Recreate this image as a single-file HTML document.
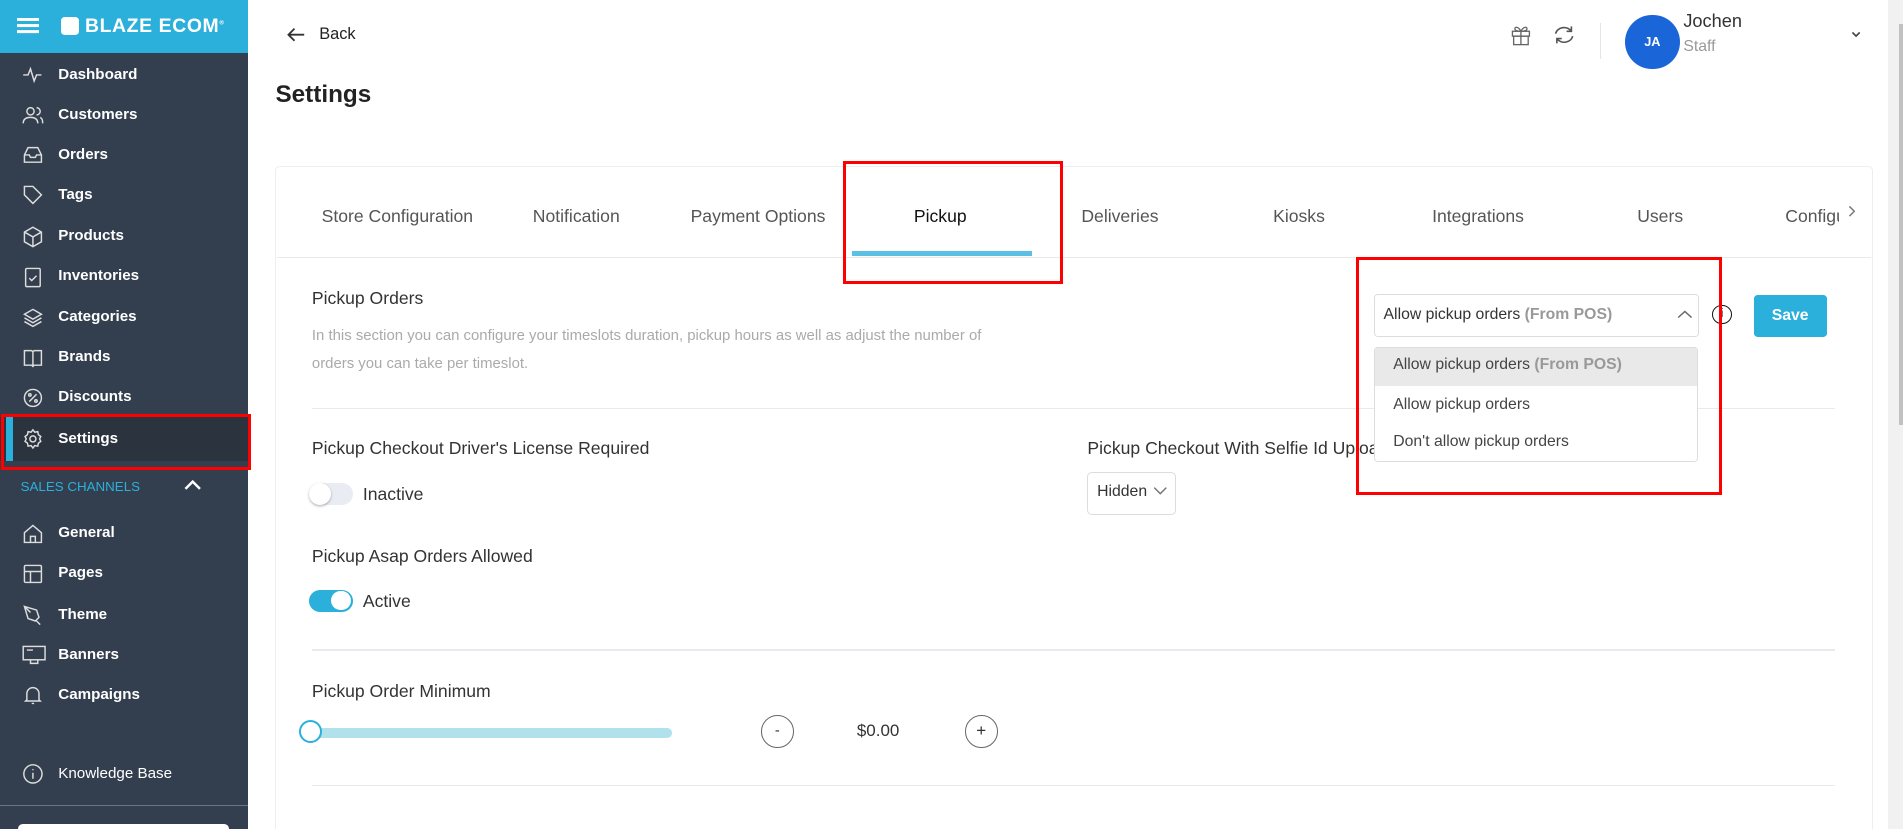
<!DOCTYPE html>
<html><head><meta charset="utf-8"><style>
html,body{margin:0;padding:0;overflow:hidden;background:#fff}
body{width:1903px;height:829px}
#r{zoom:1.21365;width:1568px;height:683px;position:relative;font-family:"Liberation Sans",sans-serif;color:#333;overflow:hidden}
.a{position:absolute}
#sb{left:0;top:0;width:204px;height:683px;background:#333f4e}
#top{left:0;top:0;width:204px;height:44px;background:#2bb0dc}
.nav{position:absolute;left:0;width:204px;height:33px;color:#fff;font-size:12.5px;font-weight:bold}
.nav span{position:absolute;left:48px;top:9px}
.nav svg{position:absolute;left:18px;top:8px}
.t{position:absolute;font-size:14.5px;color:#555;top:170px}
.lab{font-size:14.5px;color:#333}
.sep{position:absolute;left:257px;width:1255px;height:1px;background:#e9eaf0}
.red{position:absolute;border:2.5px solid #f00;box-sizing:border-box}
</style></head><body><div id="r">
<div class="a" id="sb"></div>
<div class="a" id="top">
 <div class="a" style="left:14px;top:15px;width:18px;height:2px;background:#fff;box-shadow:0 5px 0 #fff,0 10px 0 #fff"></div>
 <div class="a" style="left:50px;top:14px;width:15px;height:15px;background:#fff;border-radius:3px"></div>
 <div class="a" style="left:70px;top:12px;color:#fff;font-weight:bold;font-size:16px;letter-spacing:0.5px">BLAZE ECOM<sup style="font-size:5px">®</sup></div>
</div>
<div class="nav" style="top:45px"><svg width="18" height="18" viewBox="0 0 18 18" fill="none" stroke="#ddd" stroke-width="1.2"><path d="M1 9h4l2-5 3 10 2-5h4"/></svg><span>Dashboard</span></div>
<div class="nav" style="top:78px"><svg width="18" height="18" viewBox="0 0 18 18" fill="none" stroke="#ddd" stroke-width="1.2"><circle cx="7" cy="6" r="3"/><path d="M1 16c0-4 3-5 6-5s6 1 6 5M12 3a3 3 0 010 6M15 11c2 1 2 3 2 5"/></svg><span>Customers</span></div>
<div class="nav" style="top:111px"><svg width="18" height="18" viewBox="0 0 18 18" fill="none" stroke="#ddd" stroke-width="1.2"><path d="M2 9l3-6h8l3 6v6H2zM2 9h4l1 2h4l1-2h4"/></svg><span>Orders</span></div>
<div class="nav" style="top:144px"><svg width="18" height="18" viewBox="0 0 18 18" fill="none" stroke="#ddd" stroke-width="1.2"><path d="M2 2h7l7 7-7 7-7-7z"/></svg><span>Tags</span></div>
<div class="nav" style="top:178px"><svg width="18" height="18" viewBox="0 0 18 18" fill="none" stroke="#ddd" stroke-width="1.2"><path d="M9 1l7 4v8l-7 4-7-4V5zM2 5l7 4 7-4M9 9v8"/></svg><span>Products</span></div>
<div class="nav" style="top:211px"><svg width="18" height="18" viewBox="0 0 18 18" fill="none" stroke="#ddd" stroke-width="1.2"><rect x="3" y="2" width="12" height="15" rx="1"/><path d="M6 10l2 2 4-4"/></svg><span>Inventories</span></div>
<div class="nav" style="top:245px"><svg width="18" height="18" viewBox="0 0 18 18" fill="none" stroke="#ddd" stroke-width="1.2"><path d="M9 2l7 4-7 4-7-4zM2 9l7 4 7-4M2 12l7 4 7-4"/></svg><span>Categories</span></div>
<div class="nav" style="top:278px"><svg width="18" height="18" viewBox="0 0 18 18" fill="none" stroke="#ddd" stroke-width="1.2"><path d="M2 3h6l1 1 1-1h6v12h-6l-1 1-1-1H2zM9 4v12"/></svg><span>Brands</span></div>
<div class="nav" style="top:311px"><svg width="18" height="18" viewBox="0 0 18 18" fill="none" stroke="#ddd" stroke-width="1.2"><circle cx="9" cy="9" r="7"/><path d="M6 12l6-6"/><circle cx="6.5" cy="6.5" r="1"/><circle cx="11.5" cy="11.5" r="1"/></svg><span>Discounts</span></div>
<div class="a" style="left:0;top:344px;width:204px;height:36px;background:#2a333e"></div>
<div class="a" style="left:5px;top:344px;width:6px;height:36px;background:#2bb0dc"></div>
<div class="nav" style="top:345px"><svg width="18" height="18" viewBox="0 0 18 18" fill="none" stroke="#ddd" stroke-width="1.2"><circle cx="9" cy="9" r="2.5"/><path d="M9 1.5l1.5 2 2.5-.5.5 2.5 2 1.5-1 2 1 2-2 1.5-.5 2.5-2.5-.5L9 16.5l-1.5-2-2.5.5-.5-2.5-2-1.5 1-2-1-2 2-1.5.5-2.5 2.5.5z"/></svg><span>Settings</span></div>
<div class="red" style="left:1px;top:341px;width:206px;height:46px"></div>
<div class="a" style="left:17px;top:395px;color:#2bb0dc;font-size:11px">SALES CHANNELS</div>
<svg class="a" style="left:151px;top:394px" width="16" height="12" viewBox="0 0 16 12" fill="none" stroke="#fff" stroke-width="2"><path d="M2 9l6-6 6 6"/></svg>
<div class="nav" style="top:423px"><svg width="18" height="18" viewBox="0 0 18 18" fill="none" stroke="#ddd" stroke-width="1.2"><path d="M2 8l7-6 7 6v8H2zM7 16v-5h4v5"/></svg><span>General</span></div>
<div class="nav" style="top:456px"><svg width="18" height="18" viewBox="0 0 18 18" fill="none" stroke="#ddd" stroke-width="1.2"><rect x="2" y="2" width="14" height="14" rx="1"/><path d="M2 7h14M7 7v9"/></svg><span>Pages</span></div>
<div class="nav" style="top:490px"><svg width="18" height="18" viewBox="0 0 18 18" fill="none" stroke="#ddd" stroke-width="1.2"><path d="M2 2l10 3 2 6-3 3-6-2zM2 2l5 5M12 14l3 3"/></svg><span>Theme</span></div>
<div class="nav" style="top:523px"><svg width="20" height="18" viewBox="0 0 20 18" fill="none" stroke="#ddd" stroke-width="1.2"><rect x="1" y="2" width="18" height="11"/><path d="M4 5h5M7 13v3h6v-3"/></svg><span>Banners</span></div>
<div class="nav" style="top:556px"><svg width="18" height="18" viewBox="0 0 18 18" fill="none" stroke="#ddd" stroke-width="1.2"><path d="M4 13V8a5 5 0 0110 0v5l1 1H3zM8 16h2"/></svg><span>Campaigns</span></div>
<div class="nav" style="top:621px;font-weight:normal"><svg width="18" height="18" viewBox="0 0 18 18" fill="none" stroke="#ddd" stroke-width="1.2"><circle cx="9" cy="9" r="7.5"/><path d="M9 8v5M9 5v1"/></svg><span>Knowledge Base</span></div>
<div class="a" style="left:0;top:663px;width:204px;height:1px;background:#6a7583"></div>
<div class="a" style="left:15px;top:679px;width:174px;height:10px;background:#fff;border-radius:4px"></div>

<svg class="a" style="left:236px;top:21px" width="16" height="16" viewBox="0 0 16 16" fill="none" stroke="#333" stroke-width="1.5"><path d="M15 8H2M7 3L2 8l5 5"/></svg>
<div class="a" style="left:263px;top:21px;font-size:13.5px;color:#222">Back</div>
<div class="a" style="left:227px;top:67px;font-size:20px;font-weight:bold;color:#222">Settings</div>
<svg class="a" style="left:1244px;top:20px" width="18" height="18" viewBox="0 0 18 18" fill="none" stroke="#666" stroke-width="1.1"><rect x="2" y="6" width="14" height="4"/><rect x="3" y="10" width="12" height="7"/><path d="M9 6v11M9 6c-2-4-5-4-5-2s5 2 5 2c2-4 5-4 5-2s-5 2-5 2"/></svg>
<svg class="a" style="left:1279px;top:20px" width="20" height="18" viewBox="0 0 20 18" fill="none" stroke="#555" stroke-width="1.3"><path d="M3 8a7 6 0 0113-2M17 10a7 6 0 01-13 2M16 2v4h-4M4 16v-4h4"/></svg>
<div class="a" style="left:1318px;top:19px;width:1px;height:30px;background:#e4e4e4"></div>
<div class="a" style="left:1339px;top:12px;width:45px;height:45px;border-radius:50%;background:#1a66d9;color:#fff;font-size:10.5px;font-weight:bold;text-align:center;line-height:45px">JA</div>
<div class="a" style="left:1387px;top:9px;font-size:15px;color:#333">Jochen</div>
<div class="a" style="left:1387px;top:31px;font-size:13px;color:#999">Staff</div>
<svg class="a" style="left:1524px;top:25px" width="10" height="8" viewBox="0 0 10 8" fill="none" stroke="#444" stroke-width="1.4"><path d="M2 2l3 3 3-3"/></svg>
<div class="a" style="left:1556px;top:0;width:12px;height:683px;background:#f1f1f1"></div>
<div class="a" style="left:1565px;top:20px;width:3px;height:330px;background:#c1c1c1"></div>

<div class="a" style="left:227px;top:137px;width:1315px;height:560px;border:1px solid #eceef2;border-radius:4px"></div>
<div class="a" style="left:228px;top:212px;width:1314px;height:1px;background:#e9eaf0"></div>
<div class="t" style="left:265px">Store Configuration</div>
<div class="t" style="left:439px">Notification</div>
<div class="t" style="left:569px">Payment Options</div>
<div class="t" style="left:753px;color:#111">Pickup</div>
<div class="t" style="left:891px">Deliveries</div>
<div class="t" style="left:1049px">Kiosks</div>
<div class="t" style="left:1180px">Integrations</div>
<div class="t" style="left:1349px">Users</div>
<div class="t" style="left:1471px;width:44px;overflow:hidden;white-space:nowrap">Configurations</div>
<svg class="a" style="left:1522px;top:168px" width="8" height="12" viewBox="0 0 8 12" fill="none" stroke="#777" stroke-width="1.2"><path d="M2 2l4 4-4 4"/></svg>
<div class="a" style="left:702px;top:207px;width:148px;height:4px;background:#5bc0e3"></div>
<div class="red" style="left:695px;top:133px;width:181px;height:101px"></div>

<div class="a lab" style="left:257px;top:237px">Pickup Orders</div>
<div class="a" style="left:257px;top:265px;font-size:12.3px;color:#aaa;line-height:23px;width:585px">In this section you can configure your timeslots duration, pickup hours as well as adjust the number of orders you can take per timeslot.</div>
<div class="sep" style="top:336px"></div>
<div class="a lab" style="left:257px;top:361px">Pickup Checkout Driver's License Required</div>
<div class="a" style="left:255px;top:398px;width:36px;height:18px;border-radius:9px;background:#e9ecf2"></div>
<div class="a" style="left:255px;top:398px;width:18px;height:18px;border-radius:50%;background:#fff;box-shadow:0 1px 2px rgba(0,0,0,.3)"></div>
<div class="a lab" style="left:299px;top:399px">Inactive</div>
<div class="a lab" style="left:896px;top:361px;width:236px;overflow:hidden;white-space:nowrap">Pickup Checkout With Selfie Id Upload Required</div>
<div class="a" style="left:896px;top:389px;width:71px;height:34px;border:1px solid #ddd;border-radius:4px"></div>
<div class="a" style="left:904px;top:398px;font-size:13px;color:#333">Hidden</div>
<svg class="a" style="left:950px;top:399px" width="12" height="10" viewBox="0 0 12 10" fill="none" stroke="#777" stroke-width="1.2"><path d="M1 3l5 5 5-5"/></svg>
<div class="a lab" style="left:257px;top:450px">Pickup Asap Orders Allowed</div>
<div class="a" style="left:255px;top:486px;width:36px;height:18px;border-radius:9px;background:#2bb0dc"></div>
<div class="a" style="left:273px;top:487px;width:16px;height:16px;border-radius:50%;background:#fff"></div>
<div class="a lab" style="left:299px;top:487px">Active</div>
<div class="sep" style="top:535px"></div>
<div class="a lab" style="left:257px;top:561px">Pickup Order Minimum</div>
<div class="a" style="left:258px;top:600px;width:296px;height:8px;border-radius:4px;background:#b0e1ec"></div>
<div class="a" style="left:246px;top:593px;width:19px;height:19px;border-radius:50%;background:#fff;border:2px solid #2bb0dc;box-sizing:border-box"></div>
<div class="a" style="left:627px;top:589px;width:27px;height:27px;border-radius:50%;border:1px solid #666;box-sizing:border-box;text-align:center;line-height:25px;font-size:12px">-</div>
<div class="a" style="left:706px;top:594px;font-size:14px">$0.00</div>
<div class="a" style="left:795px;top:589px;width:27px;height:27px;border-radius:50%;border:1px solid #666;box-sizing:border-box;text-align:center;line-height:25px;font-size:14px">+</div>
<div class="sep" style="top:647px"></div>

<div class="a" style="left:1132px;top:242px;width:268px;height:36px;border:1px solid #ddd;border-radius:3px;box-sizing:border-box"></div>
<div class="a" style="left:1140px;top:252px;font-size:13px;color:#333">Allow pickup orders <b style="color:#999">(From POS)</b></div>
<svg class="a" style="left:1382px;top:255px" width="13" height="9" viewBox="0 0 13 9" fill="none" stroke="#666" stroke-width="1.2"><path d="M1 7l5.5-5 5.5 5"/></svg>
<div class="a" style="left:1411px;top:251px;width:16px;height:16px;border-radius:50%;border:1.5px solid #111;box-sizing:border-box;font-size:10px;text-align:center;line-height:13px">i</div>
<div class="a" style="left:1445px;top:243px;width:60px;height:35px;background:#2bb0dc;border-radius:3px;color:#fff;font-weight:bold;font-size:13px;text-align:center;line-height:35px">Save</div>
<div class="a" style="left:1132px;top:286px;width:267px;height:95px;border:1px solid #ddd;border-radius:3px;box-sizing:border-box;background:#fff;overflow:hidden">
 <div style="height:31px;background:#e9e9e9"></div></div>
<div class="a" style="left:1148px;top:293px;font-size:13px;color:#444">Allow pickup orders <b style="color:#999">(From POS)</b></div>
<div class="a" style="left:1148px;top:326px;font-size:13px;color:#444">Allow pickup orders</div>
<div class="a" style="left:1148px;top:357px;font-size:13px;color:#444">Don't allow pickup orders</div>
<div class="red" style="left:1117px;top:212px;width:302px;height:196px"></div>
</div></body></html>
